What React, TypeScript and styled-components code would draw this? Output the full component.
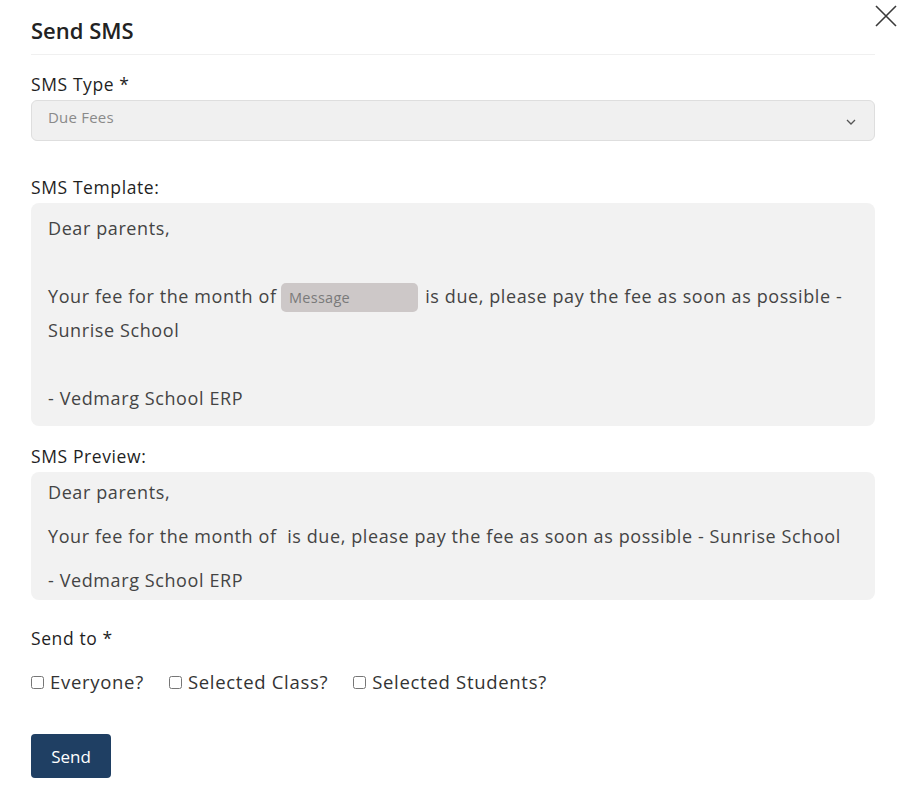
import styled, { createGlobalStyle } from 'styled-components';

const GlobalStyle = createGlobalStyle`
  body {
    margin: 0;
    background: #ffffff;
    font-family: 'Open Sans', 'Noto Sans', sans-serif;
    color: #222222;
  }
`;

const App = () => {
  return (
    <>
      <GlobalStyle />
      <Modal>
        <CloseButton type='button' aria-label='Close'>
          <svg width='24' height='24' viewBox='0 0 24 24' fill='none' stroke='#3a3a3a' strokeWidth='1.6'>
            <path d='M2 2 L22 22 M22 2 L2 22' />
          </svg>
        </CloseButton>
        <Header>
          <Title>Send SMS</Title>
        </Header>
        <Body>
          <Field>
            <Label>SMS Type *</Label>
            <SelectWrap>
              <Select defaultValue='due'>
                <option value='due'>Due Fees</option>
              </Select>
              <Chevron width='10' height='6' viewBox='0 0 10 6' fill='none' stroke='#555' strokeWidth='1.3'>
                <path d='M1 1 L5 5 L9 1' />
              </Chevron>
            </SelectWrap>
          </Field>

          <Field gap={18}>
            <Label>SMS Template:</Label>
            <TemplateBox>
              <Line>Dear parents,</Line>
              <Line>&nbsp;</Line>
              <Line>
                Your fee for the month of <MonthInput placeholder='Message' /> is due, please pay the fee as soon as
                possible - Sunrise School
              </Line>
              <Line>&nbsp;</Line>
              <Line>- Vedmarg School ERP</Line>
            </TemplateBox>
          </Field>

          <Field gap={26}>
            <Label>SMS Preview:</Label>
            <PreviewBox>
              <Para>Dear parents,</Para>
              <Para>Your fee for the month of &nbsp;is due, please pay the fee as soon as possible - Sunrise School</Para>
              <Para>- Vedmarg School ERP</Para>
            </PreviewBox>
          </Field>

          <Label>Send to *</Label>
          <CheckRow>
            <CheckLabel>
              <Checkbox type='checkbox' />
              Everyone?
            </CheckLabel>
            <CheckLabel>
              <Checkbox type='checkbox' />
              Selected Class?
            </CheckLabel>
            <CheckLabel>
              <Checkbox type='checkbox' />
              Selected Students?
            </CheckLabel>
          </CheckRow>

          <SendButton type='button'>Send</SendButton>
        </Body>
      </Modal>
    </>
  );
};

export default App;

const Modal = styled.div`
  position: relative;
  width: 905px;
  height: 800px;
  box-sizing: border-box;
  padding: 0 30px 0 31px;
`;

const CloseButton = styled.button`
  position: absolute;
  top: 4px;
  right: 7px;
  padding: 0;
  border: none;
  background: none;
  line-height: 0;
  cursor: pointer;
`;

const Header = styled.div`
  padding: 17px 0 11px;
  border-bottom: 1px solid #f0f0f0;
`;

const Title = styled.h2`
  margin: 0;
  font-size: 22px;
  font-weight: 600;
  line-height: 26px;
  color: #222222;
`;

const Body = styled.div`
  padding-top: 17px;
`;

const Field = styled.div<{ gap?: number }>`
  display: flex;
  flex-direction: column;
  margin-bottom: ${({ gap }) => gap ?? 34}px;
`;

const Label = styled.div`
  font-size: 17.5px;
  letter-spacing: 0.6px;
  line-height: 24px;
  color: #1f1f1f;
  margin-bottom: 4px;
`;

const SelectWrap = styled.div`
  position: relative;
`;

const Select = styled.select`
  width: 100%;
  height: 41px;
  padding: 0 16px 7px;
  appearance: none;
  background: #f0f0f0;
  border: 1px solid #dedede;
  border-radius: 6px;
  font-family: 'Open Sans', sans-serif;
  font-size: 15px;
  letter-spacing: 0.2px;
  color: #8a8a8a;
  outline: none;
`;

const Chevron = styled.svg`
  position: absolute;
  right: 19px;
  top: 19px;
  pointer-events: none;
`;

const TemplateBox = styled.div`
  background: #f2f2f2;
  border-radius: 8px;
  padding: 8px 17px 11px;
  font-size: 18px;
  letter-spacing: 0.6px;
  line-height: 34px;
  color: #444444;
`;

const Line = styled.div``;

const MonthInput = styled.input`
  width: 137px;
  height: 29px;
  box-sizing: border-box;
  vertical-align: middle;
  margin: -2px 2px 0 -1px;
  padding: 0 8px;
  border: none;
  border-radius: 5px;
  background: #cdc8c8;
  font-family: 'Open Sans', sans-serif;
  font-size: 14.5px;
  letter-spacing: 0.3px;
  color: #555;
  outline: none;

  &::placeholder {
    color: #7a7a7a;
  }
`;

const PreviewBox = styled.div`
  background: #f2f2f2;
  border-radius: 8px;
  padding: 6px 17px;
  font-size: 18px;
  letter-spacing: 0.6px;
  color: #444444;
`;

const Para = styled.p`
  margin: 0 0 16px;
  line-height: 28px;

  &:last-child {
    margin-bottom: 0;
  }
`;

const CheckRow = styled.div`
  display: flex;
  align-items: center;
  gap: 25px;
  margin: 20px 0 40px;
`;

const CheckLabel = styled.label`
  display: flex;
  align-items: center;
  gap: 6px;
  font-size: 18.5px;
  letter-spacing: 0.7px;
  line-height: 24px;
  color: #333333;
`;

const Checkbox = styled.input`
  width: 13px;
  height: 13px;
  margin: 0;
`;

const SendButton = styled.button`
  width: 80px;
  height: 44px;
  border: none;
  border-radius: 4px;
  background: #1f3f63;
  color: #ffffff;
  font-family: 'Open Sans', sans-serif;
  font-size: 17px;
  cursor: pointer;
`;
